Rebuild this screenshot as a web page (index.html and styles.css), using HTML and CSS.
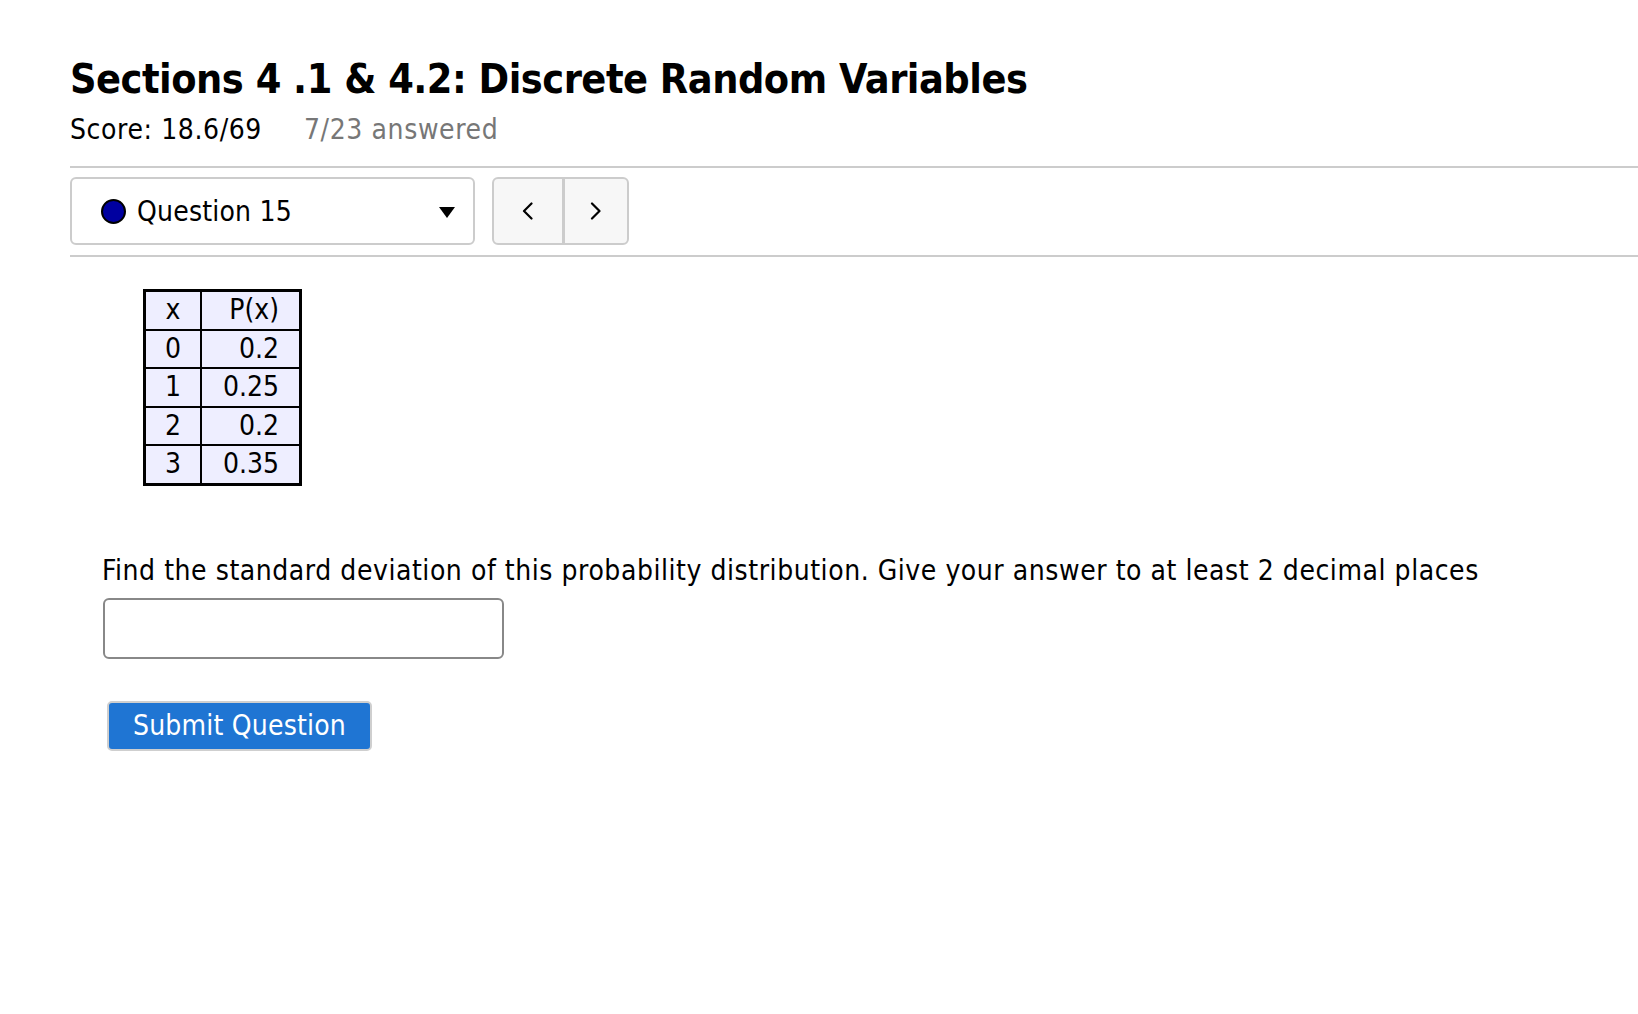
FILE: index.html
```html
<!DOCTYPE html>
<html>
<head>
<meta charset="utf-8">
<link rel="stylesheet" href="styles.css">
</head>
<body>
<div class="page">
  <h1 class="title">Sections 4 .1 &amp; 4.2: Discrete Random Variables</h1>
  <div class="scoreline"><span class="score">Score: 18.6/69</span><span class="answered">7/23 answered</span></div>
  <div class="sep"></div>
  <div class="toolbar">
    <div class="qselect">
      <span class="dot"></span>
      <span class="qlabel">Question 15</span>
      <span class="caret"></span>
    </div>
    <div class="navgroup">
      <button class="navbtn" aria-label="Previous"><svg width="12" height="18" viewBox="0 0 12 18"><polyline points="9.5,1.5 2,9 9.5,16.5" fill="none" stroke="#000" stroke-width="2.2" stroke-linecap="round" stroke-linejoin="round"/></svg></button>
      <button class="navbtn" aria-label="Next"><svg width="12" height="18" viewBox="0 0 12 18"><polyline points="2,1.5 9.5,9 2,16.5" fill="none" stroke="#000" stroke-width="2.2" stroke-linecap="round" stroke-linejoin="round"/></svg></button>
    </div>
  </div>
  <div class="sep"></div>
  <div class="question">
    <table class="dist">
      <tr><td>x</td><td>P(x)</td></tr>
      <tr><td>0</td><td>0.2</td></tr>
      <tr><td>1</td><td>0.25</td></tr>
      <tr><td>2</td><td>0.2</td></tr>
      <tr><td>3</td><td>0.35</td></tr>
    </table>
    <div class="body">
      <p class="prompt">Find the standard deviation of this probability distribution. Give your answer to at least 2 decimal places</p>
      <input class="answer" type="text">
      <div><button class="submit">Submit Question</button></div>
    </div>
  </div>
</div>
</body>
</html>
```

FILE: styles.css
```css
html, body {
  margin: 0;
  padding: 0;
  background: #fff;
}
body {
  font-family: "DejaVu Sans Condensed", "DejaVu Sans", sans-serif;
  color: #000;
}
.page {
  padding-left: 70px;
}
.title {
  margin: 54px 0 0 0;
  font-size: 41px;
  letter-spacing: -0.5px;
  line-height: 50px;
  font-weight: bold;
}
.scoreline {
  margin-top: 8px;
  font-size: 28px;
  letter-spacing: 0.6px;
  line-height: 36px;
}
.answered {
  color: #777;
  margin-left: 42px;
}
.sep {
  height: 2px;
  background: #cccccc;
}
.scoreline + .sep {
  margin-top: 18px;
}
.toolbar {
  display: flex;
  gap: 17px;
  margin: 9px 0 10px 0;
  height: 68px;
}
.qselect {
  box-sizing: border-box;
  width: 405px;
  height: 68px;
  border: 2px solid #ccc;
  border-radius: 6px;
  display: flex;
  align-items: center;
  padding: 0 18px 0 29px;
  font-size: 28px;
  letter-spacing: 0.2px;
}
.dot {
  box-sizing: border-box;
  width: 25px;
  height: 25px;
  border-radius: 50%;
  background: #0000a0;
  border: 2px solid #000;
  flex: none;
}
.qlabel {
  margin-left: 11px;
  flex: 1;
}
.caret {
  width: 0;
  height: 0;
  border-left: 8px solid transparent;
  border-right: 8px solid transparent;
  border-top: 11px solid #000;
  margin-top: 2px;
}
.navgroup {
  display: flex;
  box-sizing: border-box;
  height: 68px;
  border: 2px solid #ccc;
  border-radius: 6px;
  background: #f7f7f7;
  overflow: hidden;
}
.navbtn {
  width: 68px;
  border: 0;
  background: transparent;
  padding: 0;
  display: flex;
  align-items: center;
  justify-content: center;
}
.navbtn + .navbtn {
  border-left: 3px solid #ccc;
  width: 65px;
}
.question {
  padding-top: 32px;
}
.dist {
  margin-left: 73px;
  border-collapse: collapse;
  border: 3px solid #000;
  background: #eeeeff;
  font-size: 28px;
}
.dist td {
  border: 2px solid #000;
  height: 36.5px;
  padding: 0;
  line-height: 36px;
}
.dist td:first-child {
  width: 54px;
  text-align: center;
}
.dist td:last-child {
  width: 77px;
  text-align: right;
  padding-right: 20px;
}
.body {
  margin-left: 32px;
  padding-top: 67px;
}
.prompt {
  margin: 0;
  font-size: 28px;
  letter-spacing: 0.55px;
  line-height: 36px;
}
.answer {
  display: block;
  box-sizing: border-box;
  margin: 9px 0 0 1px;
  width: 401px;
  height: 61px;
  border: 2px solid #888;
  border-radius: 6px;
  background: #fff;
  font-size: 28px;
  font-family: inherit;
  padding: 0 10px;
}
.submit {
  margin: 42px 0 0 5px;
  box-sizing: border-box;
  width: 265px;
  height: 50px;
  background: #1f75d3;
  color: #fff;
  border: 2px solid #cfcfcf;
  border-radius: 5px;
  font-family: inherit;
  font-size: 28px;
  letter-spacing: 0.2px;
  padding: 0;
}
```
